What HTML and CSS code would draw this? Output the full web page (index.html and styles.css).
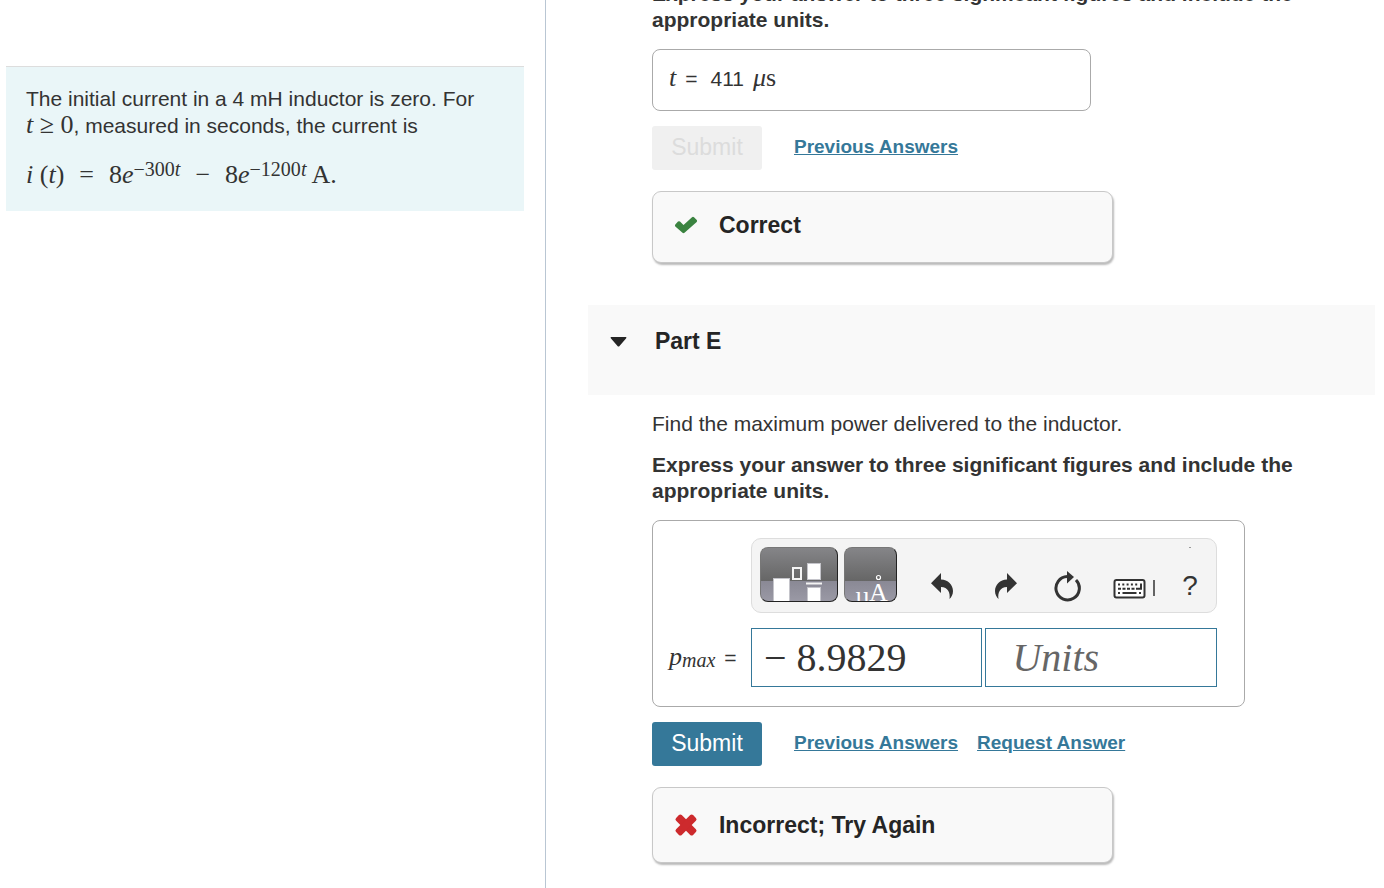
FILE: index.html
```html
<!DOCTYPE html>
<html lang="en">
<head>
  <meta charset="utf-8">
  <meta name="viewport" content="width=device-width, initial-scale=1.0">
  <title>Inductor power</title>
  <link rel="stylesheet" href="styles.css">
</head>
<body>
  <div class="page">
    <aside class="problem-pane">
      <div class="problem">
        <p>The initial current in a 4 mH inductor is zero. For <span class="math"><i>t</i> ≥ 0</span>, measured in seconds, the current is</p>
        <p class="formula">
          <span><i>i</i> (<i>t</i>)</span>
          <span>=</span>
          <span>8<i>e</i><sup>−300<i>t</i></sup></span>
          <span>−</span>
          <span>8<i>e</i><sup>−1200<i>t</i></sup></span>
          <span class="unit">A.</span>
        </p>
      </div>
    </aside>

    <main class="work-pane">
      <section class="part part-d">
        <p class="instructions">Express your answer to three significant figures and include the appropriate units.</p>
        <div class="answer-box answer-done">
          <i class="math">t</i><span>=</span><span class="answer-value">411</span><span class="math"><i>μ</i>s</span>
        </div>
        <div class="actions">
          <button type="button" class="submit" disabled>Submit</button>
          <a href="#previous-d">Previous Answers</a>
        </div>
        <div class="feedback">
          <svg class="feedback-icon" width="24" height="24" viewBox="0 0 24 24" aria-hidden="true">
            <path d="M1.300 11.500 L4 8.600 Q5 7.800 6 8.600 L9.500 12 L18 4.200 Q19 3.400 20 4.200 L22.800 7 Q23.500 8 22.700 9 L10.500 19.800 Q9.500 20.500 8.500 19.800 L1.300 13.500 Q0.500 12.500 1.300 11.500Z" fill="#3a8340"/>
          </svg>
          <strong>Correct</strong>
        </div>
      </section>

      <h2 class="part-header">
        <button type="button" class="part-toggle" aria-expanded="true">
          <svg width="18" height="10" viewBox="0 0 18 10" aria-hidden="true">
            <path d="M1 0 H16 Q17 0.600 16 1.600 L9.500 9 Q8.500 10 7.500 9 L1 1.600 Q0 0.600 1 0Z" fill="#252525"/>
          </svg>
          Part E
        </button>
      </h2>

      <section class="part">
        <p class="question">Find the maximum power delivered to the inductor.</p>
        <p class="instructions">Express your answer to three significant figures and include the appropriate units.</p>
        <div class="answer-box answer-edit">
          <div class="toolbar" role="toolbar" aria-label="Equation tools">
            <button type="button" class="menu-tool" aria-label="Templates">
              <svg width="76" height="53" viewBox="0 0 76 53" aria-hidden="true">
                <g fill="#fff" stroke="#c4c4ca" stroke-width="1">
                  <rect x="12.500" y="30.500" width="16" height="23"/>
                  <rect x="46.500" y="15.500" width="13" height="16"/>
                  <rect x="46.500" y="39.500" width="13" height="14"/>
                </g>
                <rect x="32" y="20" width="8" height="11" fill="none" stroke="#f4f4f4" stroke-width="2"/>
                <path d="M45 35.500 H61" stroke="#f4f4f4" stroke-width="2"/>
              </svg>
            </button>
            <button type="button" class="menu-tool" aria-label="Symbols">
              <svg class="symbols" width="51" height="53" viewBox="0 0 51 53" aria-hidden="true">
                <text x="10" y="56">µ</text>
                <text x="24" y="53">A</text>
                <circle cx="33.500" cy="29.500" r="2" fill="none" stroke="#fff" stroke-width="1.200"/>
              </svg>
            </button>
            <button type="button" class="tool tool-undo" aria-label="Undo">
              <svg width="24" height="28" viewBox="0 0 24 28" aria-hidden="true">
                <path d="M1 11.300 L11 1 V7.500 C18 7.500 23 13 23 19 C23 22.500 21.500 25 19.500 27 C20.500 21 18 15 11 15 V21Z" fill="#333"/>
              </svg>
            </button>
            <button type="button" class="tool tool-redo" aria-label="Redo">
              <svg width="24" height="28" viewBox="0 0 24 28" aria-hidden="true">
                <path d="M23 11.300 L13 1 V7.500 C6 7.500 1 13 1 19 C1 22.500 2.500 25 4.500 27 C3.500 21 6 15 13 15 V21Z" fill="#333"/>
              </svg>
            </button>
            <button type="button" class="tool tool-reset" aria-label="Reset">
              <svg width="28" height="32" viewBox="0 0 28 32" aria-hidden="true">
                <path d="M23 10 A11.700 11.700 0 1 1 14.300 6.500" fill="none" stroke="#333" stroke-width="3"/>
                <path d="M14 1 L21 7 L14 13.500Z" fill="#333"/>
              </svg>
            </button>
            <button type="button" class="tool tool-keyboard" aria-label="Keyboard shortcuts">
              <svg width="42" height="20" viewBox="0 0 42 20" aria-hidden="true">
                <rect x="1.500" y="1" width="30" height="17.500" rx="2" fill="#fff" stroke="#333" stroke-width="2"/>
                <g fill="none" stroke="#333" stroke-width="2">
                  <path d="M5 5.500 H25" stroke-dasharray="2 2.300"/>
                  <path d="M5 9.700 H24" stroke-dasharray="3 1.500"/>
                  <path d="M28 4.500 V9.700 H24"/>
                  <path d="M5 14 H7 M9.500 14 H23.500 M26 14 H28"/>
                  <path d="M41 1 V17" stroke-width="1.500"/>
                </g>
              </svg>
            </button>
            <button type="button" class="tool tool-help" aria-label="Help">?</button>
          </div>
          <label class="answer-label" for="answerValue"><span class="math"><i>p</i><sub><i>max</i></sub></span><span>=</span></label>
          <div class="answer-inputs">
            <input type="text" id="answerValue" class="answer-input" value="− 8.9829">
            <input type="text" id="answerUnits" class="answer-input units-input" placeholder="Units" aria-label="Units">
          </div>
        </div>
        <div class="actions">
          <button type="button" class="submit">Submit</button>
          <a href="#previous-e">Previous Answers</a>
          <a href="#request">Request Answer</a>
        </div>
        <div class="feedback feedback-wrong">
          <svg class="feedback-icon" width="24" height="24" viewBox="0 0 24 24" aria-hidden="true">
            <g fill="#cd2a2d">
              <rect x="0" y="8" width="24" height="8" rx="2" transform="rotate(45 12 12)"/>
              <rect x="0" y="8" width="24" height="8" rx="2" transform="rotate(-45 12 12)"/>
            </g>
          </svg>
          <strong>Incorrect; Try Again</strong>
        </div>
      </section>
    </main>
  </div>
</body>
</html>
```
FILE: styles.css
```css
* {
  box-sizing: border-box;
}
body {
  margin: 0;
  font-family: "Liberation Sans", Arial, sans-serif;
  font-size: 21px;
  line-height: 26px;
  color: #333;
  background-color: #fff;
}
p {
  margin: 0;
}
button {
  font-family: inherit;
  border: none;
  cursor: pointer;
}
.page {
  display: grid;
  grid-template-columns: 39.45% 1fr;
  height: 100vh;
  overflow: hidden;
}

/* Left side: problem statement */
.problem-pane {
  padding: 66px 21px 0 6px;
  border-right: 1px solid #b9c6d3;
}
.problem {
  padding: 19px 20px 22px;
  background-color: #eaf6f8;
  border-top: 1px solid #ddd;
}
.math,
.formula {
  font-family: "Liberation Serif", "Times New Roman", serif;
  font-size: 26px;
  line-height: 1;
  white-space: nowrap;
}
.formula {
  display: flex;
  align-items: baseline;
  gap: 15px;
  margin-top: 21px;
  line-height: 29px;
}
.formula sup {
  font-size: 20px;
  line-height: 0;
  vertical-align: 7px;
}
.formula .unit {
  margin-left: -10px;
}

/* Right side: parts */
.work-pane {
  overflow: hidden;
}
.part {
  padding: 16px 80px 0 106px;
}
.part-d {
  padding-top: 0;
  margin-top: -19px;
}
.instructions {
  font-weight: bold;
}
.question {
  margin-bottom: 15px;
}
.answer-box {
  margin-top: 16px;
  border: 1px solid #aaa;
  border-radius: 8px;
}
.answer-done {
  display: flex;
  align-items: baseline;
  gap: 9px;
  max-width: 439px;
  min-height: 62px;
  padding: 15px 16px;
}
.answer-value {
  margin-left: 4px;
}
.answer-edit {
  display: grid;
  grid-template-columns: 82px 1fr;
  row-gap: 15px;
  align-items: center;
  max-width: 593px;
  padding: 17px 27px 19px 16px;
}
.actions {
  display: flex;
  align-items: center;
  gap: 19px;
  margin-top: 15px;
}
.actions a {
  padding-bottom: 3px;
  font-size: 19px;
  font-weight: bold;
  color: #357899;
}
.submit {
  width: 110px;
  height: 44px;
  margin-right: 13px;
  padding-bottom: 3px;
  font-size: 23px;
  color: #fff;
  background-color: #357899;
  border-radius: 3px;
}
.submit:disabled {
  color: #dcdcdc;
  background-color: #f0f0f0;
}
.feedback {
  display: flex;
  align-items: center;
  gap: 21px;
  max-width: 461px;
  min-height: 72px;
  margin-top: 21px;
  padding: 0 21px 4px;
  font-size: 23px;
  color: #252525;
  background-color: #f9f9f9;
  border: 1px solid #c8c8c8;
  border-radius: 9px;
  box-shadow: 1px 2px 2px #bbb;
}
.feedback-wrong {
  min-height: 76px;
  padding-bottom: 0;
}
.part-header {
  height: 90px;
  margin: 42px 9px 0 42px;
  padding: 23px 22px;
  background-color: #f9f9f9;
}
.part-toggle {
  display: flex;
  align-items: center;
  gap: 27px;
  padding: 0;
  font-size: 23px;
  font-weight: bold;
  color: #252525;
  background: none;
}

/* Equation editor */
.toolbar {
  grid-column: 2;
  display: flex;
  height: 75px;
  padding: 8px;
  background-color: #f4f4f4;
  border: 1px solid #ddd;
  border-radius: 10px;
}
.menu-tool {
  height: 55px;
  margin-right: 6px;
  padding: 0;
  overflow: hidden;
  background: linear-gradient(#858588, #666 62%, #8a8995 63%, #9a99a5);
  border: 1px solid #777;
  border-right-color: #222;
  border-bottom-color: #222;
  border-radius: 8px;
}
.menu-tool svg {
  display: block;
}
.symbols text {
  font-family: "Liberation Serif", "Times New Roman", serif;
  font-size: 26px;
  fill: #fff;
}
.tool {
  display: flex;
  align-items: center;
  justify-content: center;
  width: 64px;
  padding: 20px 0 0;
  font-size: 28px;
  color: #333;
  background: none;
}
.tool-undo {
  margin-left: 7px;
}
.tool-reset {
  width: 58px;
}
.tool-keyboard {
  width: 76px;
  padding-top: 27px;
}
.tool-help {
  position: relative;
  width: 36px;
}
.tool-help::before {
  content: "";
  position: absolute;
  top: 0;
  left: 17px;
  width: 2px;
  height: 1px;
  background-color: #999;
}
.answer-label {
  display: flex;
  align-items: baseline;
  gap: 9px;
}
.answer-label sub {
  font-size: 20px;
  line-height: 0;
  vertical-align: -2px;
}
.answer-inputs {
  display: grid;
  grid-template-columns: 1fr 1fr;
  gap: 3px;
}
.answer-input {
  width: 100%;
  height: 59px;
  padding: 0 12px;
  font-family: "Liberation Serif", "Times New Roman", serif;
  font-size: 40px;
  color: #333;
  background-color: #fff;
  border: 1px solid #357899;
  border-radius: 0;
}
.units-input {
  padding-left: 26px;
}
.units-input::placeholder {
  font-style: italic;
  color: #666;
}
```
